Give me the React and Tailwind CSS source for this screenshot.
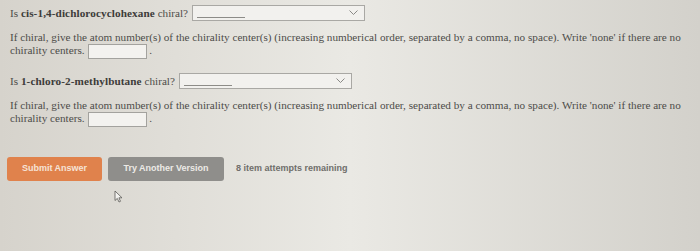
import React from "react";

const Select = ({ width }) => (
    <span
        className="relative inline-flex items-center h-[16px] border border-[#a9a8a4] bg-[#f2f1ee] align-middle"
        style={{ width }}
    >
        <span className="absolute left-[4px] top-[11px] w-[48px] border-b border-[#8d8c88]" />
        <svg className="absolute right-[6px] top-[4px] w-[9px] h-[6px]" viewBox="0 0 9 6" fill="none">
            <path d="M0.5 0.5L4.5 4.5L8.5 0.5" stroke="#8a8986" strokeWidth="1" />
        </svg>
    </span>
);

const Blank = () => (
    <span className="inline-block w-[59px] h-[15px] border border-[#a3a29e] bg-[#f3f2ef] align-middle ml-[1px] mr-[2px]" />
);

const Question = ({ name, top }) => (
    <div className={top}>
        <div className="flex items-center gap-[4px]">
            <span>
                Is <b className="text-[#3d3c3a] tracking-[0.1px]">{name}</b> chiral?
            </span>
            <Select width={173} />
        </div>
        <p className="mt-[9px] leading-[13px]">
            <span className="whitespace-nowrap">
                If chiral, give the atom number(s) of the chirality center(s) (increasing numberical order, separated by a
                comma, no space). Write 'none' if there are no
            </span>
            <br />
            chirality centers. <Blank />.
        </p>
    </div>
);

export default function App() {
    return (
        <div className="w-[700px] h-[251px] overflow-hidden bg-linear-to-r from-[#d6d3cc] via-[#eae9e4] to-[#d3d1cb] text-[#4d4c49] text-[11.2px] font-['Liberation_Serif',serif]">
            <div className="px-[10px] pt-[5px]">
                <Question name="cis-1,4-dichlorocyclohexane" top="" />
                <Question name="1-chloro-2-methylbutane" top="mt-[14px]" />
            </div>
            <div className="relative flex items-center gap-[6px] px-[7px] mt-[30px] font-['Liberation_Sans',sans-serif] font-bold text-[9px]">
                <button className="w-[95px] h-[24px] rounded-[3px] bg-[#e0824c] text-[#f6e3d6]">Submit Answer</button>
                <button className="w-[116px] h-[24px] rounded-[3px] bg-[#8f8e8b] text-[#eceae6]">Try Another Version</button>
                <span className="ml-[6px] text-[#6f6e6b]">8 item attempts remaining</span>
                <svg className="absolute left-[114px] top-[33px] w-[9px] h-[13px]" viewBox="0 0 9 13" fill="none">
                    <path d="M1 1V10.5L3.3 8.4L5 12L6.5 11.3L4.9 7.8H8L1 1Z" fill="#f4f3f0" stroke="#5a5956" strokeWidth="0.8" />
                </svg>
            </div>
        </div>
    );
}
